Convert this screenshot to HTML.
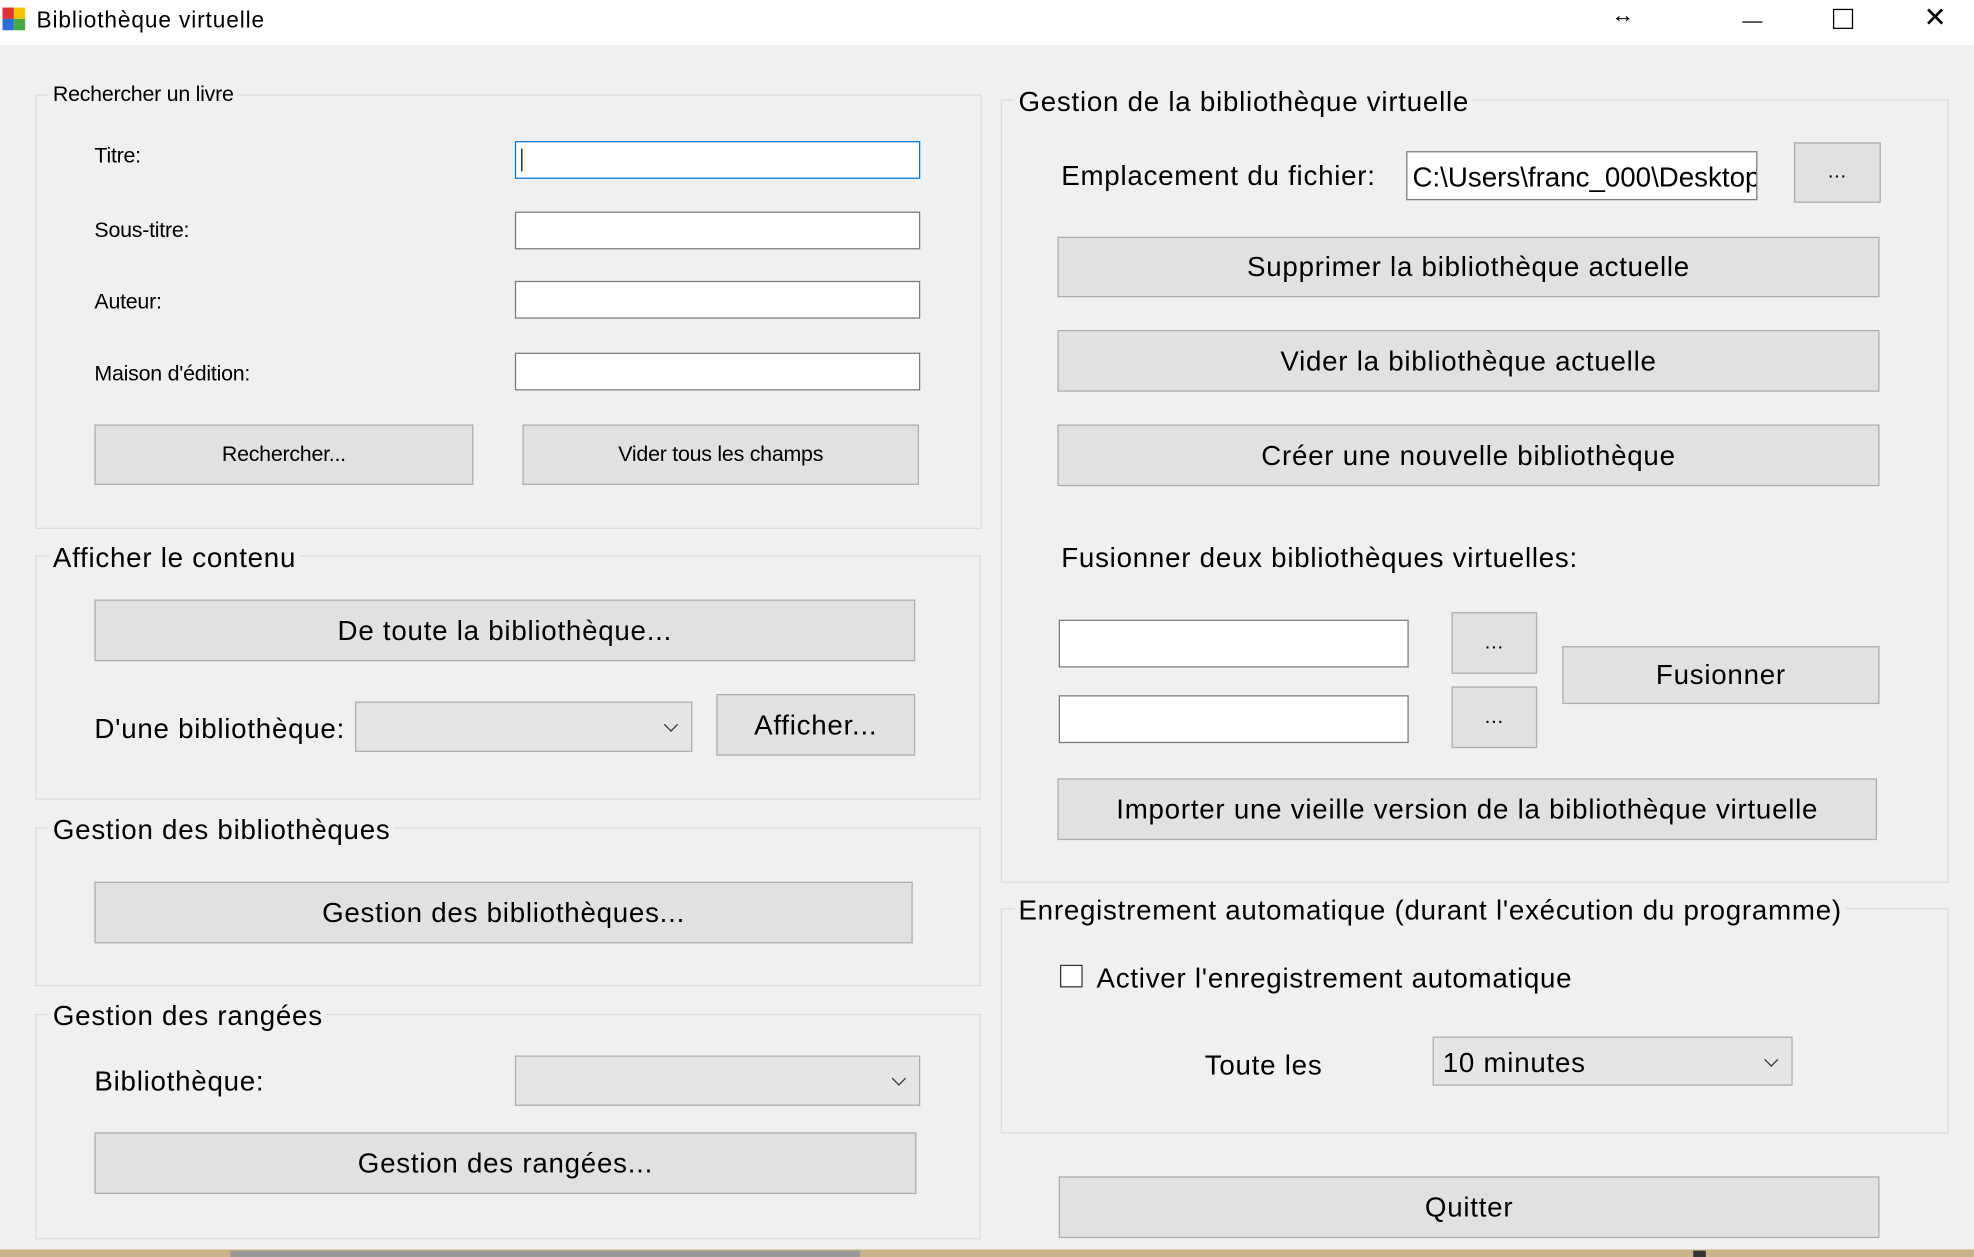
<!DOCTYPE html>
<html><head><meta charset="utf-8"><style>
html,body{margin:0;padding:0;width:1974px;height:1257px;overflow:hidden;background:#f0f0f0}
#w{position:absolute;left:0;top:0;width:1568px;height:998px;transform:scale(1.2589,1.2595);transform-origin:0 0;font-family:"Liberation Sans",sans-serif;color:#000;background:#f0f0f0}
.a{position:absolute;white-space:nowrap}
.g{position:absolute;border:1px solid #dcdcdc}
.gl{position:absolute;background:#f0f0f0;padding:0 3px;white-space:nowrap}
.b{position:absolute;background:#e1e1e1;border:1px solid #adadad;box-sizing:border-box;display:flex;align-items:center;justify-content:center;font-size:22px;letter-spacing:0.6px}
.t{position:absolute;background:#fff;border:1px solid #7a7a7a;box-sizing:border-box}
.c{position:absolute;background:#e5e5e5;border:1px solid #adadad;box-sizing:border-box;font-size:22px}
.c:after{content:"";position:absolute;right:12px;top:50%;width:7px;height:7px;border-right:1.3px solid #333;border-bottom:1.3px solid #333;transform:translateY(-70%) rotate(45deg)}
.s{font-size:17px;letter-spacing:-0.2px}
.m{font-size:22px;letter-spacing:0.6px}
</style></head><body><div id="w">
<div class="a" style="left:0;top:0;width:1568px;height:36px;background:#fff"></div>
<div class="a" style="left:2px;top:6px;width:9px;height:9px;background:#d33"></div>
<div class="a" style="left:11px;top:6px;width:9px;height:9px;background:#f5c400"></div>
<div class="a" style="left:2px;top:15px;width:9px;height:9px;background:#2a6fd6"></div>
<div class="a" style="left:11px;top:15px;width:9px;height:9px;background:#4a4"></div>
<div class="a" style="left:29px;top:6px;font-size:18px;letter-spacing:0.7px">Bibliothèque virtuelle</div>
<div class="a" style="left:1280px;top:2px;font-size:18px">↔</div>
<div class="a" style="left:1384px;top:17px;width:16px;height:1px;background:#000"></div>
<div class="a" style="left:1456px;top:7px;width:14px;height:14px;border:1.5px solid #000"></div>
<div class="a" style="left:1528px;top:1px;font-size:22px">✕</div>

<div class="g" style="left:28px;top:75px;width:750px;height:343px"></div>
<div class="gl s" style="left:39px;top:65px">Rechercher un livre</div>
<div class="a s" style="left:75px;top:114px">Titre:</div>
<div class="a s" style="left:75px;top:173px">Sous-titre:</div>
<div class="a s" style="left:75px;top:230px">Auteur:</div>
<div class="a s" style="left:75px;top:287px">Maison d'édition:</div>
<div class="t" style="left:409px;top:112px;width:322px;height:30px;border-color:#0078d7"><div class="a" style="left:4px;top:5px;width:1px;height:18px;background:#000"></div></div>
<div class="t" style="left:409px;top:168px;width:322px;height:30px"></div>
<div class="t" style="left:409px;top:223px;width:322px;height:30px"></div>
<div class="t" style="left:409px;top:280px;width:322px;height:30px"></div>
<div class="b s" style="left:75px;top:337px;width:301px;height:48px">Rechercher...</div>
<div class="b s" style="left:415px;top:337px;width:315px;height:48px">Vider tous les champs</div>

<div class="g" style="left:28px;top:441px;width:749px;height:192px"></div>
<div class="gl m" style="left:39px;top:430px">Afficher le contenu</div>
<div class="b" style="left:75px;top:476px;width:652px;height:49px">De toute la bibliothèque...</div>
<div class="a m" style="left:75px;top:566px">D'une bibliothèque:</div>
<div class="c" style="left:282px;top:557px;width:268px;height:40px"></div>
<div class="b" style="left:569px;top:551px;width:158px;height:49px">Afficher...</div>

<div class="g" style="left:28px;top:657px;width:749px;height:124px"></div>
<div class="gl m" style="left:39px;top:646px">Gestion des bibliothèques</div>
<div class="b" style="left:75px;top:700px;width:650px;height:49px">Gestion des bibliothèques...</div>

<div class="g" style="left:28px;top:805px;width:749px;height:177px"></div>
<div class="gl m" style="left:39px;top:794px">Gestion des rangées</div>
<div class="a m" style="left:75px;top:846px">Bibliothèque:</div>
<div class="c" style="left:409px;top:838px;width:322px;height:40px"></div>
<div class="b" style="left:75px;top:899px;width:653px;height:49px">Gestion des rangées...</div>

<div class="g" style="left:795px;top:79px;width:751px;height:620px"></div>
<div class="gl m" style="left:806px;top:68px">Gestion de la bibliothèque virtuelle</div>
<div class="a m" style="left:843px;top:127px">Emplacement du fichier:</div>
<div class="t" style="left:1117px;top:120px;width:279px;height:39px;overflow:hidden"><div class="a m" style="left:4px;top:7px;letter-spacing:0">C:\Users\franc_000\Desktop</div></div>
<div class="b" style="left:1425px;top:113px;width:69px;height:48px;font-size:16px">...</div>
<div class="b" style="left:840px;top:188px;width:653px;height:48px">Supprimer la bibliothèque actuelle</div>
<div class="b" style="left:840px;top:262px;width:653px;height:49px">Vider la bibliothèque actuelle</div>
<div class="b" style="left:840px;top:337px;width:653px;height:49px">Créer une nouvelle bibliothèque</div>
<div class="a m" style="left:843px;top:430px">Fusionner deux bibliothèques virtuelles:</div>
<div class="t" style="left:841px;top:492px;width:278px;height:38px"></div>
<div class="t" style="left:841px;top:552px;width:278px;height:38px"></div>
<div class="b" style="left:1153px;top:486px;width:68px;height:49px;font-size:16px">...</div>
<div class="b" style="left:1153px;top:545px;width:68px;height:49px;font-size:16px">...</div>
<div class="b" style="left:1241px;top:513px;width:252px;height:46px">Fusionner</div>
<div class="b" style="left:840px;top:618px;width:651px;height:49px">Importer une vieille version de la bibliothèque virtuelle</div>

<div class="g" style="left:795px;top:721px;width:751px;height:177px"></div>
<div class="gl m" style="left:806px;top:710px">Enregistrement automatique (durant l'exécution du programme)</div>
<div class="a" style="left:842px;top:766px;width:18px;height:18px;border:1.5px solid #333;box-sizing:border-box;background:#fff"></div>
<div class="a m" style="left:871px;top:764px">Activer l'enregistrement automatique</div>
<div class="a m" style="left:957px;top:833px">Toute les</div>
<div class="c" style="left:1138px;top:823px;width:286px;height:39px"><div class="a m" style="left:7px;top:7px">10 minutes</div></div>

<div class="b" style="left:841px;top:934px;width:652px;height:49px">Quitter</div>
<div class="a" style="left:0;top:992px;width:1568px;height:6px;background:#c9b48a"></div>
<div class="a" style="left:183px;top:993px;width:500px;height:5px;background:#999"></div>
<div class="a" style="left:1345px;top:993px;width:10px;height:5px;background:#333"></div>
</div></body></html>
